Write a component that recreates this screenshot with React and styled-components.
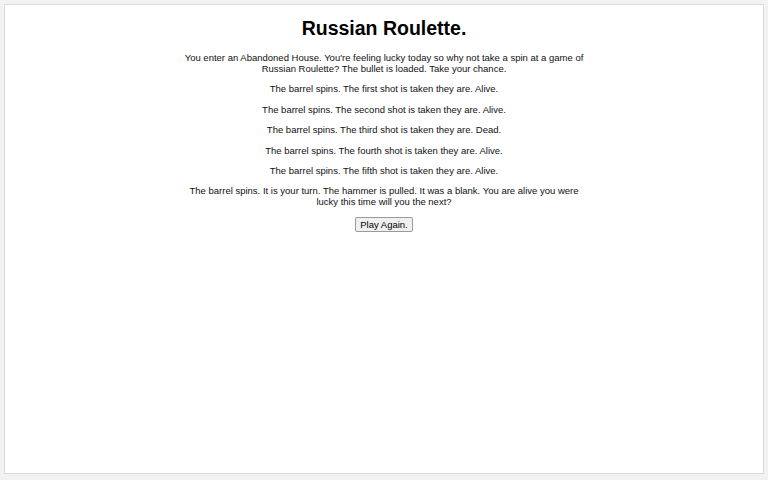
import React from 'react';
import styled, { createGlobalStyle } from 'styled-components';

const Global = createGlobalStyle`
  html, body {
    margin: 0;
    padding: 0;
    background: #f2f2f2;
  }
  body {
    font-family: "Liberation Sans", Arial, sans-serif;
  }
`;

const Page = styled.div`
  margin: 4px 4px 6px 4px;
  height: 470px;
  background: #fff;
  border: 1px solid #dcdcdc;
  box-sizing: border-box;
  display: flex;
  flex-direction: column;
  align-items: center;
  padding-top: 12px;
`;

const Title = styled.h1`
  font-size: 19.5px;
  font-weight: bold;
  margin: 0 0 12px;
  color: #000;
`;

const Story = styled.div`
  width: 410px;
  text-align: center;
  font-size: 9.5px;
  color: #111;
`;

const Line = styled.p`
  margin: 0 0 9.4px;
  line-height: 11px;
`;

const Button = styled.button`
  font-family: "Liberation Sans", Arial, sans-serif;
  font-size: 9.5px;
  height: 15px;
  padding: 0 4px;
  border: 1px solid #9a9a9a;
  border-radius: 2px;
  background: #f0f0f0;
  color: #000;
`;

const lines = [
  'The barrel spins. The first shot is taken they are. Alive.',
  'The barrel spins. The second shot is taken they are. Alive.',
  'The barrel spins. The third shot is taken they are. Dead.',
  'The barrel spins. The fourth shot is taken they are. Alive.',
  'The barrel spins. The fifth shot is taken they are. Alive.',
  'The barrel spins. It is your turn. The hammer is pulled. It was a blank. You are alive you were lucky this time will you the next?',
];

const App = () => (
  <>
    <Global />
    <Page>
      <Title>Russian Roulette.</Title>
      <Story>
        <Line>
          You enter an Abandoned House. You're feeling lucky today so why not take a spin at a game of Russian Roulette? The bullet is loaded. Take your chance.
        </Line>
        {lines.map((l, i) => (
          <Line key={i}>{l}</Line>
        ))}
      </Story>
      <Button>Play Again.</Button>
    </Page>
  </>
);

export default App;
